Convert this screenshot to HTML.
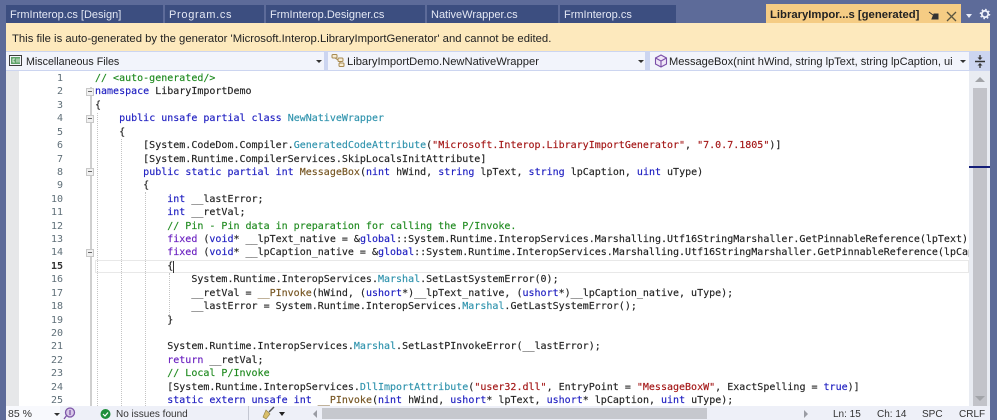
<!DOCTYPE html>
<html><head><meta charset="utf-8"><style>
html,body{margin:0;padding:0;background:#5d6b99}
#r{position:relative;width:997px;height:420px;overflow:hidden;background:#5d6b99;font-family:"Liberation Sans",sans-serif;color:#1e1e1e;filter:blur(.35px)}
#r div{position:absolute;box-sizing:border-box}
.t{top:5px;height:18px;background:#3c4e80;color:#e4e8f4;font-size:11px;line-height:20px;padding-left:4px;white-space:nowrap}
.c{top:52px;height:18px;background:#f2f4fb;font-size:11.2px;line-height:20px;white-space:nowrap;overflow:hidden;color:#222}
.a{width:0;height:0;border-left:3px solid transparent;border-right:3px solid transparent;border-top:3px solid #333}
#code{left:95px;top:72px;width:874px;height:334px;overflow:hidden;font-family:"DejaVu Sans Mono",monospace;font-size:10px;line-height:13.42px;color:#222;white-space:pre;-webkit-text-stroke:.15px}
#ln{left:30px;top:72px;width:33px;height:334px;overflow:hidden;font-family:"DejaVu Sans Mono",monospace;font-size:10px;line-height:13.42px;color:#5f6f78;text-align:right;white-space:pre}
.k{color:#1c1cc0}.y{color:#2f93ad}.s{color:#a31515}.g{color:#1f8a1f}.m{color:#74531f}.p{color:#6a20c0}
.o{left:86px;width:8px;height:8px;background:#f0f0f0;border:1px solid #c8c8c8}
.o:after{content:"";position:absolute;left:1px;top:2px;width:4px;height:1px;background:#666}
.d{width:0;border-left:1px dotted #c4c4c4}
.st{top:407px;font-size:10px;line-height:15px;color:#333;white-space:nowrap}
</style></head><body><div id="r">
<div class="t" style="left:6px;width:157px">FrmInterop.cs [Design]</div>
<div class="t" style="left:165px;width:99px;letter-spacing:.7px">Program.cs</div>
<div class="t" style="left:266px;width:159px">FrmInterop.Designer.cs</div>
<div class="t" style="left:427px;width:131px">NativeWrapper.cs</div>
<div class="t" style="left:560px;width:116px">FrmInterop.cs</div>
<div style="left:766px;top:4px;width:195px;height:20px;background:#f5cc84;font-size:11.3px;font-weight:bold;line-height:22px;padding-left:4px;white-space:nowrap;color:#222">LibraryImpor...s [generated]</div>
<svg style="position:absolute;left:928px;top:10px" width="30" height="12" viewBox="0 0 30 12"><path d="M1 2l4 3M4 9h6V4H6z" fill="#333" stroke="#333" stroke-width="1"/><path d="M19 2l9 9M28 2l-9 9" stroke="#5c5540" stroke-width="1.300" fill="none"/></svg>
<div class="a" style="left:966px;top:14px;border-left-width:3px;border-right-width:3px;border-top:4px solid #e8ecf8"></div>
<svg style="position:absolute;left:979px;top:8px" width="12" height="12" viewBox="0 0 12 12"><circle cx="6" cy="6" r="3.200" fill="none" stroke="#eef1fa" stroke-width="1.800"/><circle cx="6" cy="6" r="4.600" fill="none" stroke="#eef1fa" stroke-width="1.400" stroke-dasharray="1.600 2"/></svg>
<div style="left:6px;top:23px;width:984px;height:28px;background:#fde9bd;font-size:11.3px;line-height:33px;padding-left:6px;white-space:nowrap;color:#222">This file is auto-generated by the generator 'Microsoft.Interop.LibraryImportGenerator' and cannot be edited.</div>
<div style="left:6px;top:51px;width:984px;height:20px;background:#ccd5f0"></div>
<div class="c" style="left:6px;width:318px;padding-left:20px;font-size:10.7px">Miscellaneous Files</div>
<svg style="position:absolute;left:9px;top:55px" width="14" height="12" viewBox="0 0 14 12"><rect x=".5" y=".5" width="12" height="10" fill="#f4f6fc" stroke="#3d3d3d"/><rect x="2" y="2" width="9" height="7" fill="#5fa36a"/><path d="M6 4H4v3h2M8 3.500v4M10 3.500v4" stroke="#fff" stroke-width=".8" fill="none"/></svg>
<div class="a" style="left:316px;top:60px"></div>
<div class="c" style="left:328px;width:317px;padding-left:19px">LibaryImportDemo.NewNativeWrapper</div>
<svg style="position:absolute;left:331px;top:53px" width="16" height="15" viewBox="0 0 16 15" fill="#f6ecd4" stroke="#a88a50" stroke-width="1"><rect x="1" y="1.500" width="5" height="3.500" rx="1"/><rect x="7" y="5" width="5" height="3.500" rx="1"/><rect x="8" y="10" width="5" height="3.500" rx="1"/><path d="M4 5l3 2M9 8.500v2" fill="none"/></svg>
<div class="a" style="left:638px;top:60px"></div>
<div class="c" style="left:650px;width:319px;padding-left:19px;font-size:11.1px"><span style="display:inline-block;width:287px;overflow:hidden;vertical-align:top">MessageBox(nint hWind, string lpText, string lpCaption, ui</span></div>
<svg style="position:absolute;left:654px;top:54px" width="14" height="14" viewBox="0 0 14 14" fill="none" stroke="#7b4fa8" stroke-width="1.100"><path d="M7 1l5.500 3v6L7 13l-5.500-3V4z" fill="#efe6f7"/><path d="M1.500 4L7 7l5.500-3M7 7v6"/></svg>
<div class="a" style="left:960px;top:60px"></div>
<svg style="position:absolute;left:973px;top:54px" width="14" height="15" viewBox="0 0 14 15" fill="#333" stroke="#333"><path d="M7 1v4M7 10v4" stroke-width="1.300"/><path d="M4.500 3.500L7 6l2.500-2.500zM4.500 11.500L7 9l2.500 2.500z" stroke="none"/><path d="M2 7.500h10" stroke-width="1.500"/></svg>

<div style="left:6px;top:71px;width:963px;height:335px;background:#fff"></div>
<div style="left:6px;top:71px;width:13px;height:335px;background:#e6e7e9"></div>
<div style="left:969px;top:71px;width:21px;height:335px;background:#e9ecf2"></div>
<div style="left:973px;top:88px;width:14px;height:318px;background:#c2c3c9"></div>
<div class="a" style="left:975px;top:77px;border-left-width:5px;border-right-width:5px;border-top:0;border-bottom:5px solid #a2a4a8"></div>
<div class="a" style="left:975px;top:396px;border-left-width:5px;border-right-width:5px;border-top:5px solid #a2a4a8"></div>
<div style="left:969px;top:166px;width:21px;height:2px;background:#141e78"></div>

<div style="left:95px;top:260px;width:874px;height:13px;border:1px solid #e8e8e8"></div>
<div style="left:90px;top:87px;width:2px;height:319px;background:#cfcfcf"></div>
<div class="d" style="left:97px;top:113px;height:293px"></div>
<div class="d" style="left:121px;top:139px;height:267px"></div>
<div class="d" style="left:145px;top:192px;height:214px"></div>
<div class="d" style="left:169px;top:273px;height:42px"></div>
<div class="o" style="top:88px"></div><div class="o" style="top:115px"></div><div class="o" style="top:168px"></div><div class="o" style="top:249px"></div>

<div id="ln">1
2
3
4
5
6
7
8
9
10
11
12
13
14
<b style="color:#333">15</b>
16
17
18
19
20
21
22
23
24
25</div>
<div id="code"><span class="g">// &lt;auto-generated/&gt;</span>
<span class="k">namespace</span> LibaryImportDemo
{
    <span class="k">public unsafe partial class</span> <span class="y">NewNativeWrapper</span>
    {
        [System.CodeDom.Compiler.<span class="y">GeneratedCodeAttribute</span>(<span class="s">"Microsoft.Interop.LibraryImportGenerator"</span>, <span class="s">"7.0.7.1805"</span>)]
        [System.Runtime.CompilerServices.SkipLocalsInitAttribute]
        <span class="k">public static partial int</span> <span class="m">MessageBox</span>(<span class="k">nint</span> hWind, <span class="k">string</span> lpText, <span class="k">string</span> lpCaption, <span class="k">uint</span> uType)
        {
            <span class="k">int</span> __lastError;
            <span class="k">int</span> __retVal;
            <span class="g">// Pin - Pin data in preparation for calling the P/Invoke.</span>
            <span class="p">fixed</span> (<span class="k">void</span>* __lpText_native = &amp;<span class="k">global</span>::System.Runtime.InteropServices.Marshalling.Utf16StringMarshaller.GetPinnableReference(lpText))
            <span class="p">fixed</span> (<span class="k">void</span>* __lpCaption_native = &amp;<span class="k">global</span>::System.Runtime.InteropServices.Marshalling.Utf16StringMarshaller.GetPinnableReference(lpCaption))
            {
                System.Runtime.InteropServices.<span class="y">Marshal</span>.SetLastSystemError(0);
                __retVal = <span class="m">__PInvoke</span>(hWind, (<span class="k">ushort</span>*)__lpText_native, (<span class="k">ushort</span>*)__lpCaption_native, uType);
                __lastError = System.Runtime.InteropServices.<span class="y">Marshal</span>.GetLastSystemError();
            }

            System.Runtime.InteropServices.<span class="y">Marshal</span>.SetLastPInvokeError(__lastError);
            <span class="p">return</span> __retVal;
            <span class="g">// Local P/Invoke</span>
            [System.Runtime.InteropServices.<span class="y">DllImportAttribute</span>(<span class="s">"user32.dll"</span>, EntryPoint = <span class="s">"MessageBoxW"</span>, ExactSpelling = <span class="k">true</span>)]
            <span class="k">static extern unsafe int</span> <span class="m">__PInvoke</span>(<span class="k">nint</span> hWind, <span class="k">ushort</span>* lpText, <span class="k">ushort</span>* lpCaption, <span class="k">uint</span> uType);</div>
<div style="left:173px;top:261px;width:1px;height:12px;background:#333"></div>

<div style="left:6px;top:406px;width:984px;height:14px;background:#eef0f8"></div>
<div style="left:6px;top:406px;width:54px;height:14px;background:#f8f9fd"></div>
<div class="st" style="left:8px;font-size:10.500px">85 %</div>
<div class="a" style="left:54px;top:413px"></div>
<svg style="position:absolute;left:63px;top:407px" width="13" height="13" viewBox="0 0 13 13" fill="#d8c8e8" stroke="#7d55a8" stroke-width="1.300"><circle cx="7" cy="5.500" r="4.500"/><path d="M4 8l-3 4M7 3v5" fill="none"/></svg>
<svg style="position:absolute;left:100px;top:408px" width="12" height="12" viewBox="0 0 12 12"><circle cx="5.500" cy="6" r="5" fill="#1f8f3a"/><path d="M3 6l2 2 3-3.500" stroke="#fff" stroke-width="1.200" fill="none"/></svg>
<div class="st" style="left:116px">No issues found</div>
<div style="left:248px;top:406px;width:1px;height:14px;background:#c4c7d2"></div>
<svg style="position:absolute;left:261px;top:406px" width="14" height="14" viewBox="0 0 14 14"><path d="M13 1L8 6" stroke="#555" stroke-width="1.500"/><path d="M5 4l4 4-4 5-3-2z" fill="#d9bf6a" stroke="#8a7a40" stroke-width=".6"/></svg>
<div class="a" style="left:279px;top:412px;border-left-width:3px;border-right-width:3px;border-top:4px solid #222"></div>
<div class="a" style="left:313px;top:410px;border:4px solid transparent;border-right:4px solid #9a9ca4;border-left:0"></div>
<div style="left:322px;top:408px;width:385px;height:11px;background:#c6c8ce"></div>
<div class="a" style="left:804px;top:410px;border:4px solid transparent;border-left:4px solid #9a9ca4;border-right:0"></div>
<div class="st" style="left:833px">Ln: 15</div>
<div class="st" style="left:877px">Ch: 14</div>
<div class="st" style="left:922px">SPC</div>
<div class="st" style="left:959px">CRLF</div>
</div></body></html>
